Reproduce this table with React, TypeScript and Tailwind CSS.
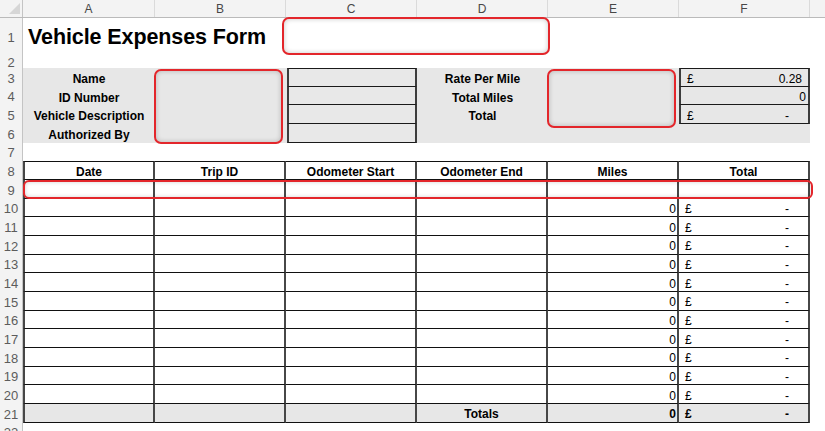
import React from "react";

const font = { fontFamily: '"Liberation Sans", Arial, sans-serif' };

function RowHead({ n }: { n?: number }) {
  return (
    <div className="w-[23px] shrink-0 h-full bg-[#f3f3f3] border-r border-[#c4c4c4] text-[#5c5c5c] text-[13px] flex items-center justify-center pt-[2px]">
      {n}
    </div>
  );
}

function Cell({ w, className = "", children }: { w: string; className?: string; children?: React.ReactNode }) {
  return <div className={`${w} shrink-0 h-full flex items-center pt-[3px] ${className}`}>{children}</div>;
}

function Pound({ value, bold = false }: { value: string; bold?: boolean }) {
  return (
    <div className={`flex w-full justify-between pl-[6px] ${value === "-" ? "pr-[19px]" : "pr-[6px]"} ${bold ? "font-bold" : ""}`}>
      <span>£</span>
      <span>{value}</span>
    </div>
  );
}

// bordered table cell (rows 8-21)
const T = "border-r-2 border-[#474747] border-b border-b-[#111]";

function TableRow({ n, gray = false, head = false, cells }: { n: number; gray?: boolean; head?: boolean; cells: React.ReactNode[] }) {
  const bg = gray ? "bg-[#e7e7e7]" : "bg-white";
  const top = head ? "border-t border-t-[#111]" : "";
  return (
    <div className="flex h-[18.68px]">
      <RowHead n={n} />
      <Cell w="w-[132px]" className={`${T} ${bg} ${top} border-l-2 justify-center font-bold`}>{cells[0]}</Cell>
      <Cell w="w-[131px]" className={`${T} ${bg} ${top} justify-center font-bold`}>{cells[1]}</Cell>
      <Cell w="w-[131px]" className={`${T} ${bg} ${top} justify-center font-bold`}>{cells[2]}</Cell>
      <Cell w="w-[131px]" className={`${T} ${bg} ${top} justify-center font-bold`}>{cells[3]}</Cell>
      <Cell w="w-[131px]" className={`${T} ${bg} ${top} ${head ? "justify-center font-bold" : "justify-end pr-[1px]"}`}>{cells[4]}</Cell>
      <Cell w="w-[131px]" className={`${T} ${bg} ${top} ${head ? "justify-center font-bold" : ""}`}>{cells[5]}</Cell>
      <div className="flex-1" />
    </div>
  );
}

export default function App() {
  const cols = ["A", "B", "C", "D", "E", "F"];
  const dataRows = [10, 11, 12, 13, 14, 15, 16, 17, 18, 19, 20];

  return (
    <div className="relative w-[825px] h-[431px] overflow-hidden bg-white text-black text-[12px]" style={font}>
      {/* column header */}
      <div className="flex h-[18px] bg-[#f3f3f3] border-b border-[#bababa]">
        <div className="w-[23px] shrink-0 h-full border-r border-[#c4c4c4] relative">
          <svg className="absolute right-[2px] bottom-[3px]" width="11" height="11" viewBox="0 0 11 11">
            <polygon points="11,0 11,11 0,11" fill="#d6d6d6" />
          </svg>
        </div>
        {cols.map((c, i) => (
          <div
            key={c}
            className={`${i === 0 ? "w-[132px]" : "w-[131px]"} shrink-0 h-full border-r border-[#dadada] text-[#474747] text-[12px] flex items-center justify-center`}
          >
            {c}
          </div>
        ))}
        <div className="flex-1" />
      </div>

      {/* row 1 */}
      <div className="flex h-[37px]">
        <RowHead n={1} />
        <div className="flex items-center pl-[5px] pt-[2px] whitespace-nowrap text-[21.5px] font-bold tracking-[-0.1px]">Vehicle Expenses Form</div>
      </div>

      {/* row 2 */}
      <div className="flex h-[13px]">
        <RowHead n={2} />
      </div>

      {/* rows 3-6 */}
      {[
        { n: 3, a: "Name", d: "Rate Per Mile", f: <Pound value="0.28" /> },
        { n: 4, a: "ID Number", d: "Total Miles", f: <div className="w-full text-right pr-[2px]">0</div> },
        { n: 5, a: "Vehicle Description", d: "Total", f: <Pound value="-" /> },
        { n: 6, a: "Authorized By", d: "", f: null },
      ].map((r) => (
        <div key={r.n} className="flex h-[18.68px]">
          <RowHead n={r.n} />
          <Cell w="w-[132px]" className="bg-[#e7e7e7] justify-center font-bold">{r.a}</Cell>
          <Cell w="w-[131px]" className="bg-[#e7e7e7]" />
          <div className="w-[131px] shrink-0 h-full bg-[#e7e7e7] pl-[1px]">
            <div className={`w-full h-full bg-[#e8e8e8] border-x-2 border-[#3c3c3c] border-b border-b-[#1a1a1a] ${r.n === 3 ? "border-t border-t-[#1a1a1a]" : ""}`} />
          </div>
          <Cell w="w-[131px]" className="bg-[#e7e7e7] justify-center font-bold">{r.d}</Cell>
          <Cell w="w-[131px]" className="bg-[#e7e7e7]" />
          <Cell
            w="w-[131px]"
            className={`bg-[#e7e7e7] ${r.n < 6 ? "border-x-2 border-[#3c3c3c] border-b border-b-[#1a1a1a]" : ""} ${r.n === 3 ? "border-t border-t-[#1a1a1a]" : ""}`}
          >
            {r.f}
          </Cell>
          <div className="flex-1" />
        </div>
      ))}

      {/* row 7 */}
      <div className="flex h-[18.68px]">
        <RowHead n={7} />
      </div>

      {/* table */}
      <TableRow n={8} head cells={["Date", "Trip ID", "Odometer Start", "Odometer End", "Miles", "Total"]} />
      <TableRow n={9} cells={[]} />
      {dataRows.map((n) => (
        <TableRow key={n} n={n} cells={["", "", "", "", "0", <Pound value="-" />]} />
      ))}
      <TableRow n={21} gray cells={["", "", "", "Totals", <span className="font-bold">0</span>, <Pound value="-" bold />]} />

      <div className="flex h-[18.68px]">
        <RowHead n={22} />
      </div>

      {/* red highlight boxes */}
      <div className="absolute left-[282px] top-[17px] w-[268px] h-[38px] rounded-[7px] border-2 border-[#e3262b] shadow-[inset_0_0_5px_rgba(0,0,0,0.22)]" />
      <div className="absolute left-[154px] top-[69px] w-[129px] h-[75px] rounded-[7px] border-2 border-[#e3262b] shadow-[inset_0_0_5px_rgba(0,0,0,0.22)]" />
      <div className="absolute left-[547px] top-[69px] w-[129px] h-[59px] rounded-[7px] border-2 border-[#e3262b] shadow-[inset_0_0_5px_rgba(0,0,0,0.22)]" />
      <div className="absolute left-[23px] top-[180px] w-[790px] h-[19px] rounded-[6px] border-2 border-[#e3262b] shadow-[inset_0_0_4px_rgba(0,0,0,0.18)]" />
    </div>
  );
}
